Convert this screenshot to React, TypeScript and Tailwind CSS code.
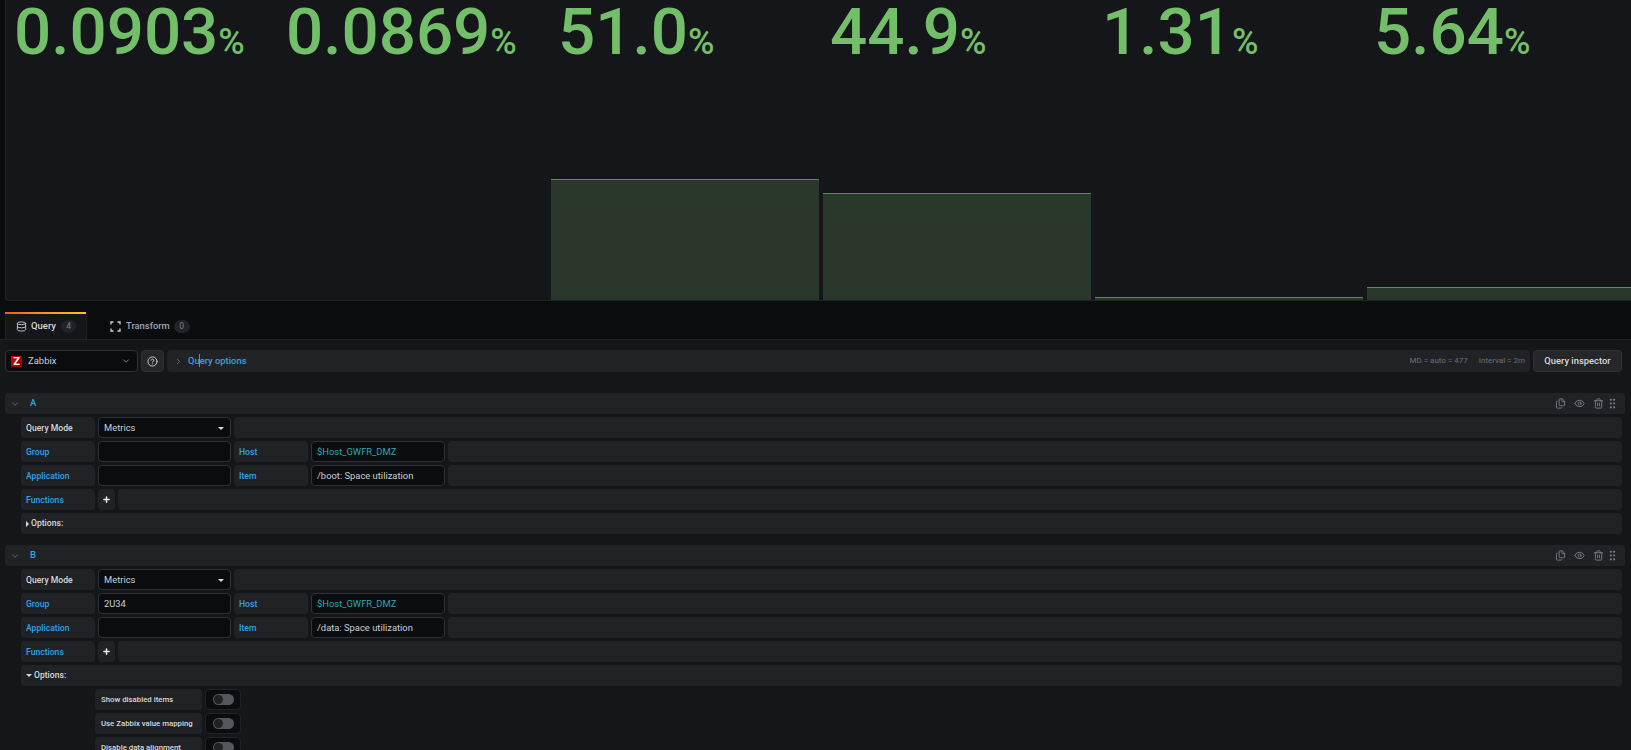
import React, { FC, ReactNode } from "react";
import { ChevronDown, ChevronRight, CircleHelp, Database, Eye, Trash2, Files, GripVertical, Plus } from "lucide-react";

const stats = [
  { value: "0.0903", bar: 0 },
  { value: "0.0869", bar: 0 },
  { value: "51.0", bar: 121 },
  { value: "44.9", bar: 107 },
  { value: "1.31", bar: 3 },
  { value: "5.64", bar: 13 },
];

const Label: FC<{ children: ReactNode; blue?: boolean; className?: string }> = ({ children, blue, className = "w-[74px] text-[8.6px]" }) => (
  <div className={`flex h-[21px] shrink-0 items-center rounded-sm bg-[#202226] pl-[5px] font-medium whitespace-nowrap ${blue ? "text-[#33a2e5]" : "text-[#d8d9da]"} ${className}`}>
    <span className="pt-px">{children}</span>
  </div>
);

const Field: FC<{ children?: ReactNode; className?: string; w?: string }> = ({ children, className = "text-[#c7d0d9]", w = "w-[133px]" }) => (
  <div className={`flex h-[21px] shrink-0 items-center rounded-sm border border-[#2c3235] bg-[#0b0c0e] pt-[2px] pl-[5px] text-[9.4px] ${w} ${className}`}>
    {children}
  </div>
);

const Filler: FC<{ children?: ReactNode }> = ({ children }) => (
  <div className="flex h-[21px] grow items-center rounded-sm bg-[#202226] pl-[5px]">{children}</div>
);

const Row: FC<{ children: ReactNode }> = ({ children }) => <div className="flex gap-[3px]">{children}</div>;

const ModeSelect: FC = () => (
  <div className="flex h-[21px] w-[133px] shrink-0 items-center justify-between rounded-sm border border-[#2c3235] bg-[#0b0c0e] pt-[2px] pr-[6px] pl-[5px] text-[9.4px] text-[#c7d0d9]">
    Metrics
    <span className="h-0 w-0 border-x-[3px] border-t-[3px] border-x-transparent border-t-[#d8d9da]" />
  </div>
);

const Toggle: FC = () => (
  <div className="flex h-[21px] w-[36px] shrink-0 items-center justify-center rounded-sm border border-[#202226] bg-[#0b0c0e]">
    <div className="flex h-[11px] w-[21px] items-center rounded-full bg-[#54575c] pl-px">
      <div className="h-[9px] w-[9px] rounded-full bg-[#1f2125]" />
    </div>
  </div>
);

const QueryHeader: FC<{ name: string }> = ({ name }) => (
  <div className="flex h-[21px] items-center rounded-sm bg-[#202226] pr-[6px] pl-[5px]">
    <ChevronDown size={10} className="text-[#6e7075]" />
    <span className="ml-[10px] text-[9.5px] font-medium text-[#33a2e5]">{name}</span>
    <div className="ml-auto flex items-center text-[#7b8087]">
      <Files size={11} />
      <Eye size={11} className="ml-[8px]" />
      <Trash2 size={11} className="ml-[8px]" />
      <GripVertical size={13} className="ml-[2px]" />
    </div>
  </div>
);

const QueryBlock: FC<{ name: string; group?: string; item: string; open?: boolean }> = ({ name, group, item, open }) => (
  <div className="flex flex-col gap-[3px]">
    <QueryHeader name={name} />
    <div className="flex flex-col gap-[3px] pr-[3px] pl-[16px]">
      <Row>
        <Label>Query Mode</Label>
        <ModeSelect />
        <Filler />
      </Row>
      <Row>
        <Label blue>Group</Label>
        <Field>{group}</Field>
        <Label blue>Host</Label>
        <Field className="text-[#2aa8b5]" w="w-[134px]">$Host_GWFR_DMZ</Field>
        <Filler />
      </Row>
      <Row>
        <Label blue>Application</Label>
        <Field />
        <Label blue>Item</Label>
        <Field w="w-[134px]">{item}</Field>
        <Filler />
      </Row>
      <Row>
        <Label blue>Functions</Label>
        <div className="flex h-[21px] w-[17px] shrink-0 items-center justify-center rounded-sm bg-[#202226] text-[#e9edf2]">
          <Plus size={9} strokeWidth={4} />
        </div>
        <Filler />
      </Row>
      <Filler>
        {open ? (
          <span className="mr-[2px] h-0 w-0 border-x-[3px] border-t-[3px] border-x-transparent border-t-[#d8d9da]" />
        ) : (
          <span className="mr-[2px] h-0 w-0 border-y-[3px] border-l-[3px] border-y-transparent border-l-[#d8d9da]" />
        )}
        <span className="text-[8.6px] font-medium text-[#d8d9da]">Options:</span>
      </Filler>
      {open && (
        <div className="flex flex-col gap-[3px] pl-[74px]">
          {["Show disabled items", "Use Zabbix value mapping", "Disable data alignment"].map((t) => (
            <Row key={t}>
              <Label className="w-[107px] pl-[6px] text-[7.8px]">{t}</Label>
              <Toggle />
            </Row>
          ))}
        </div>
      )}
    </div>
  </div>
);

const App: FC = () => {
  return (
    <div className="h-[750px] w-[1631px] overflow-hidden bg-[#0b0c0e] font-['Roboto',sans-serif]">
      <div className="ml-[5px] grid h-[301px] grid-cols-[repeat(6,272px)] overflow-hidden rounded-bl-sm border-b border-l border-[#202226] bg-[#141619] pl-[1px]">
        {stats.map((s) => (
          <div key={s.value} className="flex h-[300px] flex-col justify-between pr-[4px]">
            <div className="pl-[7px] text-[65.5px] leading-[64px] font-medium whitespace-nowrap text-[#73bf69]">
              {s.value}
              <span className="text-[36px]">%</span>
            </div>
            {s.bar > 0 && (
              <div
                className="shrink-0 border-t border-[#5a8a55] bg-[#29382b]"
                style={{ height: s.bar }}
              />
            )}
          </div>
        ))}
      </div>

      <div className="flex h-[39px] items-end border-b border-[#202226] pl-[5px]">
        <div className="relative flex h-[27px] w-[82px] items-center rounded-t-sm border-x border-[#202226] bg-[#141619] pt-px pl-[10px]">
          <div className="absolute top-0 -left-px h-[2px] w-[81px] bg-gradient-to-r from-[#f05a28] to-[#fbca0a]" />
          <Database size={11} className="text-[#c7d0d9]" />
          <span className="ml-[4px] text-[9.5px] font-medium text-[#d8d9da]">Query</span>
          <span className="ml-[5px] flex h-[13px] w-[15px] items-center justify-center rounded-full bg-[#202226] text-[8.5px] text-[#7b8087]">4</span>
        </div>
        <div className="flex h-[27px] items-center pt-px pl-[23px]">
          <svg width="11" height="11" viewBox="0 0 11 11" fill="none" stroke="#c7d0d9" strokeWidth="1.3">
            <path d="M1 3.5V1h2.5M7.5 1H10v2.5M10 7.5V10H7.5M3.5 10H1V7.5" />
          </svg>
          <span className="ml-[5px] text-[9.4px] font-medium text-[#9fa7b3]">Transform</span>
          <span className="ml-[4px] flex h-[13px] w-[16px] items-center justify-center rounded-full bg-[#202226] text-[8.5px] text-[#7b8087]">0</span>
        </div>
      </div>

      <div className="h-[410px] bg-[#141619] pt-[10px] pr-[6px] pl-[5px]">
        <div className="flex gap-[3px] pr-[3px]">
          <div className="flex h-[22px] w-[133px] shrink-0 items-center rounded-sm border border-[#2c3235] bg-[#0b0c0e] pr-[6px] pl-[5px]">
            <div className="flex h-[11px] w-[11px] items-center justify-center bg-gradient-to-br from-[#e00000] to-[#8a0000] text-[11px] leading-none font-bold text-white">Z</div>
            <span className="ml-[6px] text-[9.5px] text-[#c7d0d9]">Zabbix</span>
            <ChevronDown size={10} className="ml-auto text-[#8e8e8e]" />
          </div>
          <div className="flex h-[22px] w-[23px] shrink-0 items-center justify-center rounded-sm border border-[#2c3235] bg-[#25272b] text-[#d8d9da]">
            <CircleHelp size={11} />
          </div>
          <div className="flex h-[22px] grow items-center rounded-sm bg-[#202226] pr-[5px] pl-[7px]">
            <ChevronRight size={9} className="text-[#7b8087]" />
            <span className="relative ml-[5px] text-[9.4px] font-medium text-[#33a2e5]">
              Query options
              <span className="absolute top-0 left-[11px] h-[13px] w-px bg-[#33a2e5]" />
            </span>
            <span className="ml-auto text-[8px] text-[#6e7075]">MD = auto = 477</span>
            <span className="ml-[11px] text-[8px] text-[#6e7075]">Interval = 2m</span>
          </div>
          <div className="flex h-[22px] w-[89px] shrink-0 items-center justify-center rounded-sm border border-[#2c3235] bg-[#25272b] text-[9.4px] font-medium text-[#d8d9da]">
            Query inspector
          </div>
        </div>

        <div className="mt-[21px] flex flex-col gap-[11px]">
          <QueryBlock name="A" item="/boot: Space utilization" />
          <QueryBlock name="B" group="2U34" item="/data: Space utilization" open />
        </div>
      </div>
    </div>
  );
};

export default App;
